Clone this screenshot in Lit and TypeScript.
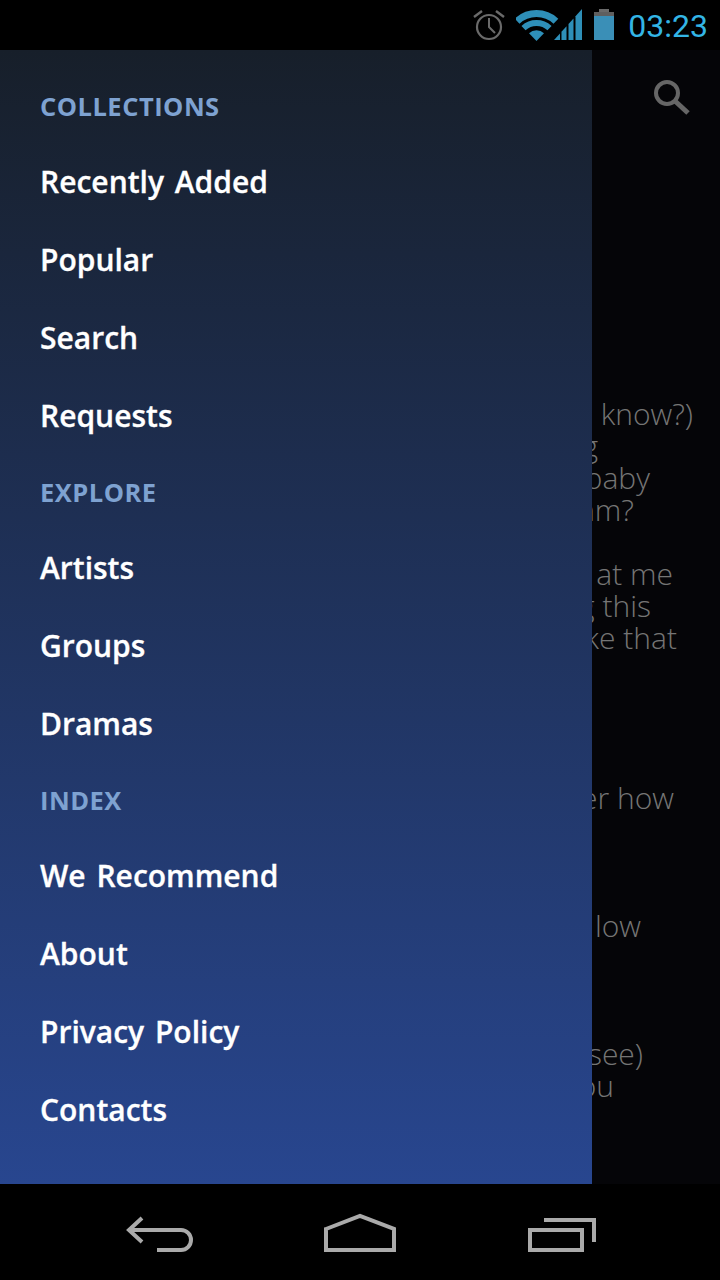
import { html, css, LitElement } from 'lit';
import { customElement } from 'lit/decorators.js';

const MENU = [
  { title: 'COLLECTIONS', items: ['Recently Added', 'Popular', 'Search', 'Requests'] },
  { title: 'EXPLORE', items: ['Artists', 'Groups', 'Dramas'] },
  { title: 'INDEX', items: ['We Recommend', 'About', 'Privacy Policy', 'Contacts'] },
];

// text lines behind the drawer, end = x of the right edge of the line, empty = blank line
const LYRICS = [
  { text: 'know?)', end: 693 },
  { text: 'g', end: 598 },
  { text: 'baby', end: 650 },
  { text: 'hm?', end: 634 },
  { text: '', end: 0 },
  { text: 'at me', end: 673 },
  { text: 'g this', end: 651 },
  { text: 'ke that', end: 677 },
  { text: '', end: 0 },
  { text: '', end: 0 },
  { text: '', end: 0 },
  { text: '', end: 0 },
  { text: 'er how', end: 674 },
  { text: '', end: 0 },
  { text: '', end: 0 },
  { text: '', end: 0 },
  { text: 'low', end: 641 },
  { text: '', end: 0 },
  { text: '', end: 0 },
  { text: '', end: 0 },
  { text: 'see)', end: 643 },
  { text: 'ou', end: 614 },
];

@customElement('app-root')
export class AppRoot extends LitElement {
  static styles = css`
    :host {
      display: block;
      width: 720px;
      height: 1280px;
      background: #000;
      font-family: 'Open Sans', sans-serif;
    }
    .screen {
      display: flex;
      flex-direction: column;
      height: 1280px;
    }
    .status {
      height: 50px;
      flex: none;
      display: flex;
      align-items: flex-start;
      justify-content: flex-end;
      background: #000;
    }
    .status svg {
      display: block;
      flex: none;
    }
    .alarm {
      margin-right: 9px;
    }
    .conn {
      margin-right: 11px;
    }
    .battery {
      margin-right: 14px;
    }
    .time {
      font-family: Roboto, sans-serif;
      font-size: 32px;
      line-height: 52px;
      color: #33b5e5;
      margin-right: 12px;
    }
    .main {
      flex: 1;
      position: relative;
      overflow: hidden;
      background: #050508;
    }
    .actionbar {
      height: 94px;
      display: flex;
      align-items: center;
      justify-content: flex-end;
      padding-right: 29px;
    }
    .lyrics {
      padding-top: 254px;
      font-size: 30px;
      font-weight: 300;
      line-height: 32px;
      color: #757575;
    }
    .line {
      height: 32px;
      text-align: right;
      white-space: nowrap;
    }
    .drawer {
      position: absolute;
      left: 0;
      top: 0;
      bottom: 0;
      width: 592px;
      padding-top: 19px;
      box-sizing: border-box;
      background: linear-gradient(180deg, #171f2a 0%, #28468f 100%);
    }
    .head {
      height: 74px;
      display: flex;
      align-items: center;
      padding-left: 40px;
      font-size: 25.5px;
      font-weight: 700;
      letter-spacing: 0.5px;
      color: #7ea2d1;
    }
    .item {
      height: 78px;
      box-sizing: border-box;
      padding-bottom: 2px;
      display: flex;
      align-items: center;
      padding-left: 40px;
      font-size: 30px;
      font-weight: 600;
      word-spacing: 3px;
      -webkit-text-stroke: 0.3px #fff;
      color: #fff;
    }
    .nav {
      height: 96px;
      flex: none;
      display: grid;
      grid-template-columns: repeat(3, 200px);
      justify-content: center;
      justify-items: center;
      background: #000;
    }
    .nav svg {
      display: block;
      fill: none;
      stroke: #aaa;
      stroke-width: 4;
    }
  `;

  renderStatus() {
    return html`
      <div class="status">
        <svg class="alarm" width="34" height="50" viewBox="0 0 34 50">
          <circle cx="16" cy="27" r="12" fill="none" stroke="#6a6a6a" stroke-width="2.2"></circle>
          <path d="M16 18V27L22 33" fill="none" stroke="#6a6a6a" stroke-width="2"></path>
          <path d="M1 17L9 11M31 17L23 11" fill="none" stroke="#6a6a6a" stroke-width="2.4"></path>
        </svg>
        <svg class="conn" width="67" height="50" viewBox="516 0 67 50">
          <g fill="none" stroke="#2e8fb8">
            <path d="M517.1 21.2A28.5 28.5 0 0 1 555.9 21.2" stroke-width="7"></path>
            <path d="M523.5 28.1A19 19 0 0 1 549.5 28.1" stroke-width="6"></path>
          </g>
          <path d="M536.5 41L529 33.2A11 11 0 0 1 544 33.2Z" fill="#2e8fb8"></path>
          <g fill="#2e8fb8">
            <path d="M554 40L560 33.4V40Z"></path>
            <path d="M561.5 31.7L566.5 26.2V40H561.5Z"></path>
            <path d="M568.5 24L573.5 18.5V40H568.5Z"></path>
            <path d="M575.5 16.2L582 9V40H575.5Z"></path>
          </g>
        </svg>
        <svg class="battery" width="20" height="50" viewBox="0 0 20 50">
          <rect x="5" y="9" width="10" height="4" fill="#6a6a6a"></rect>
          <rect x="0" y="12" width="20" height="4" fill="#5f5f5f"></rect>
          <rect x="0" y="16" width="20" height="24" fill="#3a8fb7"></rect>
        </svg>
        <span class="time">03:23</span>
      </div>
    `;
  }

  renderNav() {
    return html`
      <div class="nav">
        <svg width="100" height="96" viewBox="0 0 100 96">
          <path d="M32 34L19 46L32 58M20 46H71A10 10 0 0 1 71 66H47"></path>
        </svg>
        <svg width="100" height="96" viewBox="0 0 100 96">
          <path d="M16 45L50 32L84 45V66H16Z"></path>
        </svg>
        <svg width="100" height="96" viewBox="0 0 100 96">
          <rect x="20" y="46" width="52" height="20"></rect>
          <path d="M34 36H84V58"></path>
        </svg>
      </div>
    `;
  }

  render() {
    return html`
      <div class="screen">
        ${this.renderStatus()}
        <div class="main">
          <div class="actionbar">
            <svg width="38" height="36" viewBox="0 0 38 36" fill="none" stroke="#666">
              <circle cx="14" cy="14" r="11" stroke-width="4"></circle>
              <path d="M22 22L35 34" stroke-width="5"></path>
            </svg>
          </div>
          <div class="lyrics">
            ${LYRICS.map(
              (l) => html`<div class="line" style="padding-right:${l.text ? 720 - l.end : 0}px">${l.text}</div>`
            )}
          </div>
          <div class="drawer">
            ${MENU.map(
              (group) => html`
                <div class="head">${group.title}</div>
                ${group.items.map((item) => html`<div class="item">${item}</div>`)}
              `
            )}
          </div>
        </div>
        ${this.renderNav()}
      </div>
    `;
  }
}
